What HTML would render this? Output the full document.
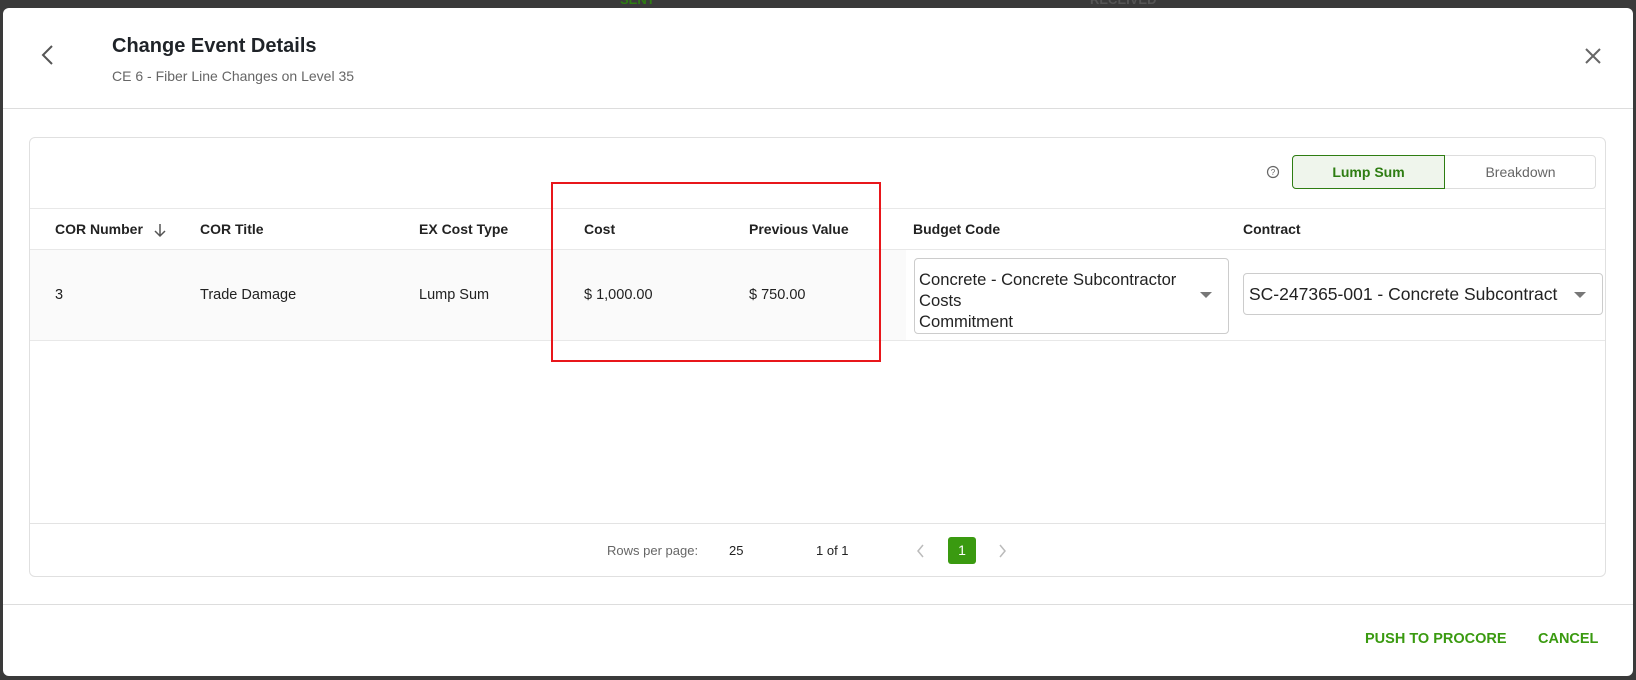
<!DOCTYPE html>
<html><head><meta charset="utf-8"><style>
*{box-sizing:border-box;margin:0;padding:0}
body{width:1636px;height:680px;background:#3a3a3a;font-family:"Liberation Sans",Arial,sans-serif;position:relative;overflow:hidden;color:#222}
.a{position:absolute;white-space:nowrap}
.modal{position:absolute;left:3px;top:8px;width:1630px;height:668px;background:#fff;border-radius:6px}
.h{font-size:14px;font-weight:bold;color:#222;top:221px}
.c{font-size:14.5px;color:#222;top:287px}
</style></head><body>
<div class="a" style="left:620px;top:-8px;color:#2e7d12;font-size:13px;font-weight:bold">SENT</div>
<div class="a" style="left:1090px;top:-8px;color:#555;font-size:13px;font-weight:bold">RECEIVED</div>
<div class="modal"></div>
<svg class="a" style="left:38px;top:43px" width="20" height="24" viewBox="0 0 20 24"><path d="M14 3 L5 12 L14 21" fill="none" stroke="#555" stroke-width="2"/></svg>
<div class="a" style="left:112px;top:35px;font-size:20px;font-weight:bold;color:#1f2328">Change Event Details</div>
<div class="a" style="left:112px;top:68px;font-size:14px;color:#666">CE 6 - Fiber Line Changes on Level 35</div>
<svg class="a" style="left:1584px;top:47px" width="18" height="18" viewBox="0 0 18 18"><path d="M2 2L16 16M16 2L2 16" stroke="#666" stroke-width="2"/></svg>
<div class="a" style="left:3px;top:108px;width:1630px;height:1px;background:#ddd"></div>
<div class="a" style="left:29px;top:137px;width:1577px;height:440px;border:1px solid #e0e0e0;border-radius:6px"></div>
<svg class="a" style="left:1266px;top:165px" width="14" height="14" viewBox="0 0 14 14"><circle cx="7" cy="7" r="5.5" fill="none" stroke="#666" stroke-width="1.2"/><text x="7" y="10" font-size="8" text-anchor="middle" fill="#666" font-family="Liberation Sans">?</text></svg>
<div class="a" style="left:1292px;top:155px;width:304px;height:34px;border:1px solid #ddd;border-radius:4px"></div>
<div class="a" style="left:1292px;top:155px;width:153px;height:34px;border:1px solid #2e7d12;background:#eff5ec;border-radius:4px 0 0 4px;color:#2e7d12;font-weight:bold;font-size:14px;text-align:center;line-height:32px">Lump Sum</div>
<div class="a" style="left:1445px;top:155px;width:151px;height:34px;color:#666;font-size:14px;text-align:center;line-height:34px">Breakdown</div>
<div class="a" style="left:30px;top:208px;width:1575px;height:1px;background:#e8e8e8"></div>
<div class="a" style="left:30px;top:249px;width:1575px;height:1px;background:#e8e8e8"></div>
<div class="a" style="left:30px;top:250px;width:876px;height:90px;background:#fafafa"></div>
<div class="a" style="left:30px;top:340px;width:1575px;height:1px;background:#e8e8e8"></div>
<div class="a h" style="left:55px">COR Number</div>
<svg class="a" style="left:153px;top:222px" width="14" height="16" viewBox="0 0 14 16"><path d="M7 2V14M2 9L7 14L12 9" fill="none" stroke="#555" stroke-width="1.5"/></svg>
<div class="a h" style="left:200px">COR Title</div>
<div class="a h" style="left:419px">EX Cost Type</div>
<div class="a h" style="left:584px">Cost</div>
<div class="a h" style="left:749px">Previous Value</div>
<div class="a h" style="left:913px">Budget Code</div>
<div class="a h" style="left:1243px">Contract</div>
<div class="a c" style="left:55px">3</div>
<div class="a c" style="left:200px">Trade Damage</div>
<div class="a c" style="left:419px">Lump Sum</div>
<div class="a c" style="left:584px">$ 1,000.00</div>
<div class="a c" style="left:749px">$ 750.00</div>
<div class="a" style="left:914px;top:258px;width:315px;height:76px;border:1px solid #ccc;border-radius:4px;background:#fff;font-size:16.6px;line-height:21px;padding:10px 0 0 4px;color:#222">Concrete - Concrete Subcontractor<br>Costs<br>Commitment</div>
<svg class="a" style="left:1200px;top:292px" width="12" height="6"><path d="M0 0H12L6 6Z" fill="#777"/></svg>
<div class="a" style="left:1243px;top:273px;width:360px;height:42px;border:1px solid #ccc;border-radius:4px;background:#fff;font-size:17.5px;line-height:40px;padding-left:5px;color:#222">SC-247365-001 - Concrete Subcontract</div>
<svg class="a" style="left:1574px;top:292px" width="12" height="6"><path d="M0 0H12L6 6Z" fill="#777"/></svg>
<div class="a" style="left:551px;top:182px;width:330px;height:180px;border:2px solid #e8161b"></div>
<div class="a" style="left:30px;top:523px;width:1575px;height:1px;background:#e3e3e3"></div>
<div class="a" style="left:607px;top:543px;font-size:13px;color:#666">Rows per page:</div>
<div class="a" style="left:729px;top:543px;font-size:13px;color:#222">25</div>
<div class="a" style="left:816px;top:543px;font-size:13px;color:#222">1 of 1</div>
<svg class="a" style="left:916px;top:543px" width="10" height="16"><path d="M7 2L2 8L7 14" fill="none" stroke="#bbb" stroke-width="1.5"/></svg>
<div class="a" style="left:948px;top:537px;width:28px;height:27px;background:#3a9a10;border-radius:3px;color:#fff;font-size:14px;text-align:center;line-height:27px">1</div>
<svg class="a" style="left:997px;top:543px" width="10" height="16"><path d="M3 2L8 8L3 14" fill="none" stroke="#bbb" stroke-width="1.5"/></svg>
<div class="a" style="left:3px;top:604px;width:1630px;height:1px;background:#ddd"></div>
<div class="a" style="left:1365px;top:631px;font-size:14.5px;font-weight:bold;color:#3a9a10">PUSH TO PROCORE</div>
<div class="a" style="left:1538px;top:631px;font-size:14.5px;font-weight:bold;color:#3a9a10">CANCEL</div>
</body></html>
